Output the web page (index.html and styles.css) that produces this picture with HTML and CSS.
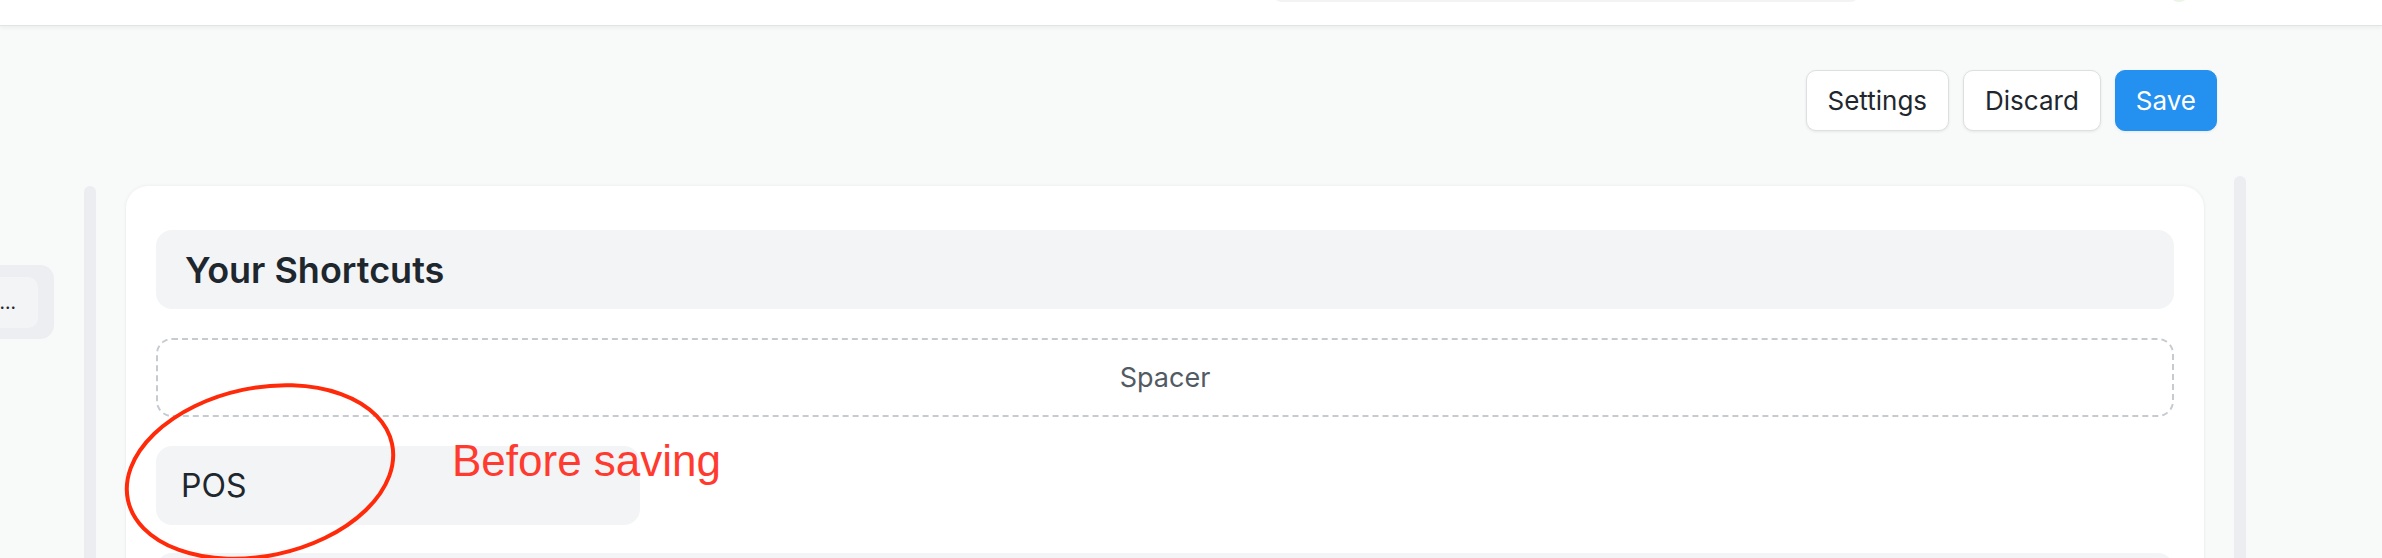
FILE: index.html
```html
<!DOCTYPE html>
<html lang="en">
<head>
<meta charset="utf-8">
<title>Workspace</title>
<link rel="stylesheet" href="styles.css">
</head>
<body>
  <header class="navbar">
    <div class="nav-search"></div>
    <div class="nav-avatar"></div>
  </header>

  <main class="page">
    <div class="page-actions">
      <button class="btn">Settings</button>
      <button class="btn">Discard</button>
      <button class="btn btn-primary">Save</button>
    </div>

    <div class="layout">
      <aside class="sidebar">
        <div class="sidebar-item">
          <div class="sidebar-item-inner"><span class="dots">...</span></div>
        </div>
      </aside>
      <div class="rail"></div>

      <section class="card">
        <div class="block block-header">Your Shortcuts</div>
        <div class="block block-spacer">Spacer</div>
        <div class="block block-shortcut">POS</div>
        <div class="block block-next"></div>
      </section>

      <div class="rail rail-right"></div>
    </div>
  </main>

  <div class="annotation">
    <svg class="annotation-ring" width="2382" height="558" viewBox="0 0 2382 558">
      <ellipse cx="260" cy="472" rx="135" ry="84" transform="rotate(-12 260 472)" fill="none" stroke="#ff2a0a" stroke-width="4"/>
    </svg>
    <div class="annotation-note">Before saving</div>
  </div>
</body>
</html>
```

FILE: styles.css
```css
html, body {
  margin: 0;
  padding: 0;
  height: 558px;
  overflow: hidden;
}

body {
  background: #f8f9f9;
  font-family: Inter, "Noto Sans", sans-serif;
  color: #1f272e;
  position: relative;
}

.navbar {
  height: 25px;
  background: #ffffff;
  border-bottom: 1px solid #e2e3e4;
  box-shadow: 0 2px 4px rgba(0, 0, 0, 0.05);
  display: flex;
  align-items: flex-start;
  overflow: hidden;
  position: relative;
  z-index: 1;
}

.nav-search {
  width: 588px;
  height: 32px;
  margin-top: -30px;
  margin-left: 1272px;
  background: #f3f3f3;
  border-radius: 10px;
}

.nav-avatar {
  width: 22px;
  height: 22px;
  margin-top: -20px;
  margin-left: 308px;
  border-radius: 50%;
  background: #eaf6e4;
}

.page {
  padding-top: 44px;
}

.page-actions {
  display: flex;
  justify-content: flex-end;
  gap: 14px;
  padding-right: 165px;
}

.btn {
  height: 61px;
  padding: 0 21px;
  font-family: Inter, "Noto Sans", sans-serif;
  font-size: 26px;
  color: #1f272e;
  background: #ffffff;
  border: 1px solid #dedfe0;
  border-radius: 10px;
  box-shadow: 0 1px 3px rgba(0, 0, 0, 0.08);
}

.btn-primary {
  background: #2490ef;
  border-color: #2490ef;
  color: #ffffff;
  padding: 0 20px;
}

.layout {
  margin-top: 55px;
  display: grid;
  grid-template-columns: 54px 12px 2078px 12px;
  column-gap: 30px;
  align-items: start;
}

.sidebar {
  overflow: hidden;
  padding-top: 79px;
}

.sidebar-item {
  width: 120px;
  margin-left: -66px;
  background: #eceef1;
  border-radius: 14px;
  padding: 12px 16px 11px 0;
  box-sizing: border-box;
}

.sidebar-item-inner {
  height: 51px;
  background: #f3f4f6;
  border-radius: 10px;
  display: flex;
  align-items: center;
  justify-content: flex-end;
  padding-right: 22px;
}

.dots {
  font-size: 19px;
  color: #1f272e;
  line-height: 1;
}

.rail {
  height: 400px;
  background: #ebedf0;
  border-radius: 6px;
}

.rail-right {
  margin-top: -10px;
}

.card {
  background: #ffffff;
  border-radius: 22px;
  box-shadow: 0 0 4px rgba(0, 0, 0, 0.06), 0 1px 2px rgba(0, 0, 0, 0.04);
  padding: 44px 30px 40px 30px;
  display: flex;
  flex-direction: column;
  gap: 29px;
  min-height: 400px;
}

.block {
  box-sizing: border-box;
  height: 79px;
  border-radius: 16px;
  display: flex;
  align-items: center;
}

.block-header {
  background: #f3f4f6;
  padding-left: 29px;
  font-size: 36px;
  font-weight: 600;
  color: #1f272e;
}

.block-spacer {
  border: 2px dashed #c7cbd0;
  justify-content: center;
  font-size: 27px;
  color: #525a63;
}

.block-shortcut {
  width: 484px;
  background: #f3f4f6;
  padding-left: 25px;
  font-size: 32px;
  color: #1f272e;
}

.block-next {
  background: #f3f4f6;
  margin-top: -1px;
}

.annotation {
  position: absolute;
  left: 0;
  top: 0;
  width: 2382px;
  height: 558px;
  pointer-events: none;
  z-index: 5;
}

.annotation-ring {
  position: absolute;
  left: 0;
  top: 0;
}

.annotation-note {
  position: absolute;
  left: 452px;
  top: 439px;
  font-family: "Liberation Sans", Arial, sans-serif;
  font-size: 44px;
  line-height: 1;
  color: #ff3b30;
  white-space: nowrap;
}
```
